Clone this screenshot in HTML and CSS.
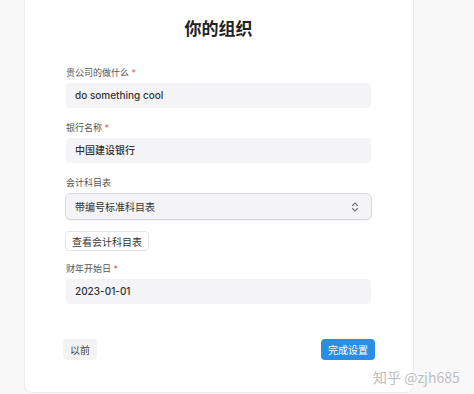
FILE: index.html
```html
<!DOCTYPE html>
<html lang="zh">
<head>
<meta charset="utf-8">
<link rel="stylesheet" href="styles.css">
</head>
<body>
<div class="page">
  <div class="card">
    <h1 class="title">你的组织</h1>
    <div class="field">
      <label class="label">贵公司的做什么 <span class="req">*</span></label>
      <div class="input">do something cool</div>
    </div>
    <div class="field">
      <label class="label">银行名称 <span class="req">*</span></label>
      <div class="input">中国建设银行</div>
    </div>
    <div class="field field-select">
      <label class="label">会计科目表</label>
      <div class="select">
        <span>带编号标准科目表</span>
        <svg class="chev" width="8" height="12" viewBox="0 0 8 12"><path d="M1.5 4.5 L4 2 L6.5 4.5 M1.5 7.5 L4 10 L6.5 7.5" fill="none" stroke="#777" stroke-width="1.1" stroke-linecap="round" stroke-linejoin="round"/></svg>
      </div>
    </div>
    <button class="btn-outline">查看会计科目表</button>
    <div class="field">
      <label class="label">财年开始日 <span class="req">*</span></label>
      <div class="input">2023-01-01</div>
    </div>
    <div class="actions">
      <button class="btn-ghost">以前</button>
      <button class="btn-primary">完成设置</button>
    </div>
  </div>
  <div class="watermark">知乎 @zjh685</div>
</div>
</body>
</html>
```
FILE: styles.css
```css
html, body {
  margin: 0;
  padding: 0;
  background: #f7f8f7;
}
body {
  font-family: Inter, "Noto Sans CJK SC", sans-serif;
  width: 474px;
  height: 394px;
  overflow: hidden;
}
.page {
  position: relative;
  height: 394px;
  padding-left: 24px;
}
.card {
  width: 305px;
  height: 375px;
  background: #fff;
  border: 1px solid #ececec;
  border-top: none;
  border-radius: 0 0 8px 8px;
  padding: 17px 42px 0 41px;
  box-sizing: content-box;
}
.title {
  margin: 0 0 25px;
  text-align: center;
  font-size: 17px;
  line-height: 24px;
  font-weight: 700;
  color: #222;
}
.field {
  margin-bottom: 13px;
}
.label {
  display: block;
  font-size: 9px;
  line-height: 14px;
  color: #555;
  margin-bottom: 3px;
}
.req {
  color: #e05a5a;
}
.input {
  height: 25px;
  line-height: 25px;
  background: #f4f4f6;
  border-radius: 4px;
  padding: 0 9px;
  font-size: 10px;
  font-weight: 500;
  color: #333;
}
.field-select {
  margin-bottom: 11px;
}
.select {
  height: 25px;
  margin-left: -1px;
  margin-right: -1px;
  border: 1px solid #d8d9dc;
  border-radius: 6px;
  background: #f4f4f6;
  display: flex;
  align-items: center;
  justify-content: space-between;
  padding: 0 12px 0 9px;
  font-size: 10px;
  color: #333;
  box-shadow: 0 1px 2px rgba(0,0,0,0.06);
}
.chev {
  display: block;
}
.btn-outline {
  display: block;
  margin: 0 0 11px -1px;
  height: 20px;
  padding: 0 6px;
  font-family: inherit;
  font-size: 10px;
  color: #333;
  background: #fff;
  border: 1px solid #e4e4e6;
  border-radius: 4px;
}
.actions {
  display: flex;
  justify-content: space-between;
  margin: 35px -4px 0 -3px;
}
.btn-ghost,
.btn-primary {
  height: 21px;
  padding: 0 7px;
  font-family: inherit;
  font-size: 10px;
  border: none;
  border-radius: 4px;
}
.btn-ghost {
  background: #f3f3f4;
  color: #444;
}
.btn-primary {
  background: #2b8ee6;
  color: #fff;
}
.watermark {
  position: absolute;
  left: 373px;
  top: 367px;
  font-size: 14px;
  line-height: 20px;
  color: #bdbdbd;
  text-shadow: 0 0 1px #fff, 0 0 2px #fff;
  font-family: "Noto Sans CJK SC", sans-serif;
}
```
